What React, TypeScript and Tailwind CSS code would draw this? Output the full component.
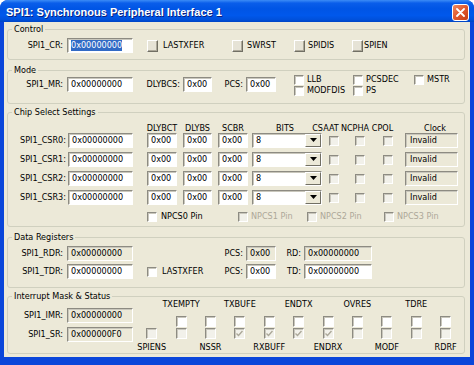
import React from 'react';

type Kind = 'white' | 'gray' | 'raised';

const sunken =
  'border border-t-[#8D8B82] border-l-[#8D8B82] border-b-white border-r-white shadow-[inset_1px_1px_0_#C9C7BC]';

function Label({ w, pr = 'pr-[4px]', children }: { w: string; pr?: string; children: React.ReactNode }) {
  return <span className={`${w} ${pr} shrink-0 text-right whitespace-nowrap`}>{children}</span>;
}

function Field({ w, gray, children }: { w: string; gray?: boolean; children: React.ReactNode }) {
  return (
    <div
      className={`${w} h-[15px] shrink-0 flex items-center pl-[3px] whitespace-nowrap overflow-hidden ${sunken} ${
        gray ? 'bg-[#ECE9D8]' : 'bg-white'
      }`}
    >
      {children}
    </div>
  );
}

function Check({ kind = 'white', checked, size = 'w-[11px] h-[11px]' }: { kind?: Kind; checked?: boolean; size?: string }) {
  if (kind === 'raised') {
    return (
      <span className="w-[11px] h-[12px] shrink-0 border border-t-white border-l-white border-b-[#716F64] border-r-[#716F64] shadow-[inset_-1px_-1px_0_#ACA899] bg-[#E6E3D6]" />
    );
  }
  return (
    <span
      className={`${size} shrink-0 flex items-center justify-center ${sunken} ${
        kind === 'gray' ? 'bg-[#F2F1EA]' : 'bg-white'
      }`}
    >
      {checked && (
        <svg width="7" height="7" viewBox="0 0 7 7">
          <polyline points="0.5,3.5 2.5,5.5 6.5,1" fill="none" stroke="#ACA899" strokeWidth="1.4" />
        </svg>
      )}
    </span>
  );
}

function Combo() {
  return (
    <div className={`w-[70px] h-[15px] shrink-0 flex items-center bg-white ${sunken}`}>
      <span className="flex-1 pl-[3px]">8</span>
      <span className="w-[16px] h-[13px] flex items-center justify-center bg-[#ECE9D8] border border-t-white border-l-white border-b-[#716F64] border-r-[#716F64]">
        <svg width="7" height="5" viewBox="0 0 7 5">
          <polygon points="0,0 7,0 3.5,4" fill="#000" />
        </svg>
      </span>
    </div>
  );
}

function Group({ title, h, mt, children }: { title: string; h: string; mt: string; children: React.ReactNode }) {
  return (
    <fieldset className={`w-[458px] ${h} ${mt} shrink-0 border border-[#D0D0BF] rounded-[3px]`}>
      <legend className="ml-[4px] px-[2px] leading-[11px]">{title}</legend>
      {children}
    </fieldset>
  );
}

const csrRows = ['SPI1_CSR0:', 'SPI1_CSR1:', 'SPI1_CSR2:', 'SPI1_CSR3:'];

const irqCols = [
  { bottom: 'SPIENS', noTop: true },
  { top: 'TXEMPTY' },
  { bottom: 'NSSR' },
  { top: 'TXBUFE', sr: true },
  { bottom: 'RXBUFF', sr: true },
  { top: 'ENDTX', sr: true },
  { bottom: 'ENDRX', sr: true },
  { top: 'OVRES' },
  { bottom: 'MODF' },
  { top: 'TDRE' },
  { bottom: 'RDRF' },
];

export default function App() {
  return (
    <div className="w-[474px] h-[365px] flex flex-col bg-[#0A46DA] rounded-t-[8px] overflow-hidden text-[9px] leading-[11px] text-black font-['DejaVu_Sans_Condensed','Liberation_Sans',sans-serif]">
      {/* Title bar */}
      <div className="h-[22px] shrink-0 flex items-start justify-between pl-[6px] pr-[5px] bg-[linear-gradient(to_bottom,#3C8CF6_0%,#0A5EEA_14%,#0055E5_40%,#0058EC_70%,#0050DA_90%,#0044C4_100%)]">
        <span className="pt-[6px] text-[11px] leading-[13px] font-bold text-white font-['Liberation_Sans',sans-serif] [text-shadow:1px_1px_0_#0A1F7E]">
          SPI1: Synchronous Peripheral Interface 1
        </span>
        <span className="mt-[4px] w-[17px] h-[17px] flex items-center justify-center rounded-[3px] border border-white bg-[linear-gradient(135deg,#F08A60_0%,#E0582E_50%,#C43E16_100%)]">
          <svg width="9" height="9" viewBox="0 0 9 9">
            <path d="M1 1L8 8M8 1L1 8" stroke="#fff" strokeWidth="1.8" strokeLinecap="round" />
          </svg>
        </span>
      </div>

      {/* Client area */}
      <div className="flex-1 mx-[4px] mb-[8px] bg-[#ECE9D8] pl-[3px] pt-[2px] flex flex-col">
        <Group title="Control" h="h-[36px]" mt="mt-0">
          <div className="flex items-center h-[15px] mt-[3px]">
            <Label w="w-[59px]">SPI1_CR:</Label>
            <Field w="w-[66px]">
              <span className="bg-[#316AC5] text-white">0x00000000</span>
            </Field>
            <div className="ml-[14px] w-[85px] flex items-center gap-[5px]">
              <Check kind="raised" />
              <span>LASTXFER</span>
            </div>
            <div className="w-[62px] flex items-center gap-[4px]">
              <Check kind="raised" />
              <span>SWRST</span>
            </div>
            <div className="w-[58px] flex items-center gap-[3px]">
              <Check kind="raised" />
              <span>SPIDIS</span>
            </div>
            <div className="flex items-center gap-[1px]">
              <Check kind="raised" />
              <span>SPIEN</span>
            </div>
          </div>
        </Group>

        <Group title="Mode" h="h-[39px]" mt="mt-[5px]">
          <div className="flex items-start">
            <div className="flex items-center h-[15px] mt-[1px]">
              <Label w="w-[59px]">SPI1_MR:</Label>
              <Field w="w-[66px]">0x00000000</Field>
              <Label w="w-[50px]" pr="pr-[3px]">DLYBCS:</Label>
              <Field w="w-[29px]">0x00</Field>
              <Label w="w-[34px]" pr="pr-[3px]">PCS:</Label>
              <Field w="w-[30px]">0x00</Field>
            </div>
            <div className="ml-[18px] -mt-[2px] grid grid-cols-[59px_61px_auto]">
              {[
                ['LLB', 'PCSDEC', 'MSTR'],
                ['MODFDIS', 'PS', ''],
              ].flatMap((row) =>
                row.map((name, i) => (
                  <div key={name + i} className="h-[11px] flex items-center gap-[3px] whitespace-nowrap">
                    {name && (
                      <>
                        <Check size="w-[10px] h-[10px]" />
                        <span>{name}</span>
                      </>
                    )}
                  </div>
                ))
              )}
            </div>
          </div>
        </Group>

        <Group title="Chip Select Settings" h="h-[120px]" mt="mt-[3px]">
          <div className="flex mt-[5px] h-[10px] leading-[10px] whitespace-nowrap">
            <span className="ml-[139px] w-[30px] flex justify-center">DLYBCT</span>
            <span className="ml-[6px] w-[29px] flex justify-center">DLYBS</span>
            <span className="ml-[6px] w-[30px] flex justify-center">SCBR</span>
            <span className="w-[63px] pl-[11px] flex justify-center">BITS</span>
            <span className="w-[29px] flex justify-center">CSAAT</span>
            <span className="w-[30px] flex justify-center">NCPHA</span>
            <span className="w-[25px] flex justify-center">CPOL</span>
            <span className="ml-[15px] w-[50px] flex justify-center">Clock</span>
          </div>
          <div className="flex flex-col gap-[4px]">
            {csrRows.map((name) => (
              <div key={name} className="flex items-center h-[15px]">
                <Label w="w-[60px]" pr="pr-[2px]">{name}</Label>
                <Field w="w-[65px]">0x00000000</Field>
                <div className="ml-[14px]">
                  <Field w="w-[30px]">0x00</Field>
                </div>
                <div className="ml-[6px]">
                  <Field w="w-[29px]">0x00</Field>
                </div>
                <div className="ml-[6px]">
                  <Field w="w-[30px]">0x00</Field>
                </div>
                <div className="ml-[4px]">
                  <Combo />
                </div>
                <div className="ml-[7px] flex">
                  <Check kind="gray" size="w-[10px] h-[10px]" />
                </div>
                <div className="ml-[16px] flex">
                  <Check kind="gray" size="w-[10px] h-[10px]" />
                </div>
                <div className="ml-[18px] flex">
                  <Check kind="gray" size="w-[10px] h-[10px]" />
                </div>
                <div className="ml-[12px]">
                  <Field w="w-[53px]" gray>
                    <span className="pl-[1px]">Invalid</span>
                  </Field>
                </div>
              </div>
            ))}
          </div>
          <div className="flex items-center mt-[6px] h-[11px] whitespace-nowrap">
            <div className="ml-[139px] w-[91px] flex items-center gap-[4px]">
              <Check size="w-[10px] h-[10px]" />
              <span>NPCS0 Pin</span>
            </div>
            <div className="w-[69px] flex items-center gap-[3px] text-[#ACA899]">
              <Check kind="gray" size="w-[10px] h-[10px]" />
              <span>NPCS1 Pin</span>
            </div>
            <div className="w-[77px] flex items-center gap-[3px] text-[#ACA899]">
              <Check kind="gray" size="w-[10px] h-[10px]" />
              <span>NPCS2 Pin</span>
            </div>
            <div className="flex items-center gap-[3px] text-[#ACA899]">
              <Check kind="gray" size="w-[10px] h-[10px]" />
              <span>NPCS3 Pin</span>
            </div>
          </div>
        </Group>

        <Group title="Data Registers" h="h-[56px]" mt="mt-[5px]">
          <div className="flex items-center h-[15px] mt-[3px]">
            <Label w="w-[59px]">SPI1_RDR:</Label>
            <Field w="w-[66px]" gray>0x00000000</Field>
            <Label w="w-[113px]" pr="pr-[3px]">PCS:</Label>
            <Field w="w-[30px]" gray>0x00</Field>
            <Label w="w-[28px]" pr="pr-[3px]">RD:</Label>
            <Field w="w-[68px]" gray>0x00000000</Field>
          </div>
          <div className="flex items-center h-[15px] mt-[3px]">
            <Label w="w-[59px]">SPI1_TDR:</Label>
            <Field w="w-[66px]">0x00000000</Field>
            <div className="w-[113px] shrink-0 flex items-center pl-[14px] whitespace-nowrap">
              <Check size="w-[10px] h-[10px]" />
              <span className="ml-[5px]">LASTXFER</span>
              <span className="ml-auto pr-[3px]">PCS:</span>
            </div>
            <Field w="w-[30px]">0x00</Field>
            <Label w="w-[28px]" pr="pr-[3px]">TD:</Label>
            <Field w="w-[68px]">0x00000000</Field>
          </div>
        </Group>

        <Group title="Interrupt Mask & Status" h="h-[63px]" mt="mt-[3px]">
          <div className="flex">
            <div className="flex flex-col gap-[4px] mt-[6px]">
              <div className="flex items-center h-[15px]">
                <Label w="w-[59px]">SPI1_IMR:</Label>
                <Field w="w-[66px]" gray>0x00000000</Field>
              </div>
              <div className="flex items-center h-[15px]">
                <Label w="w-[59px]">SPI1_SR:</Label>
                <Field w="w-[66px]" gray>0x000000F0</Field>
              </div>
            </div>
            <div className="ml-[4px] -mt-[3px] flex flex-col whitespace-nowrap">
              <div className="flex h-[11px]">
                {irqCols.map((c, i) => (
                  <span key={i} className="w-[29.4px] flex justify-center">{c.top ?? ''}</span>
                ))}
              </div>
              <div className="flex h-[11px] mt-[6px]">
                {irqCols.map((c, i) => (
                  <span key={i} className="w-[29.4px] flex justify-center">
                    {!c.noTop && <Check />}
                  </span>
                ))}
              </div>
              <div className="flex h-[11px] mt-[1px]">
                {irqCols.map((c, i) => (
                  <span key={i} className="w-[29.4px] flex justify-center">
                    <Check kind="gray" checked={!!c.sr} />
                  </span>
                ))}
              </div>
              <div className="flex h-[10px] leading-[10px] mt-[3px]">
                {irqCols.map((c, i) => (
                  <span key={i} className="w-[29.4px] flex justify-center">{c.bottom ?? ''}</span>
                ))}
              </div>
            </div>
          </div>
        </Group>
      </div>
    </div>
  );
}
